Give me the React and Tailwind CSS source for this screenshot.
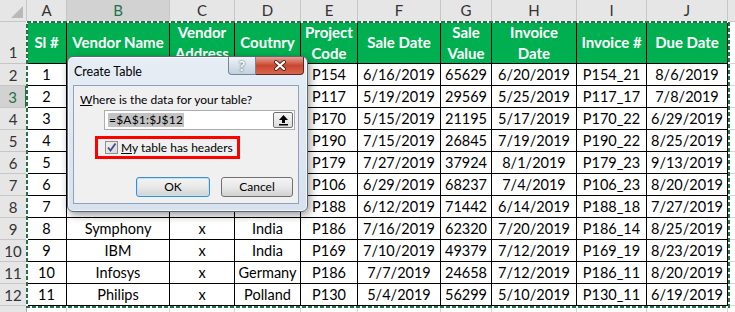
import React from 'react';

// Excel sheet with the "Create Table" dialog open over it.

const COLS = ['A', 'B', 'C', 'D', 'E', 'F', 'G', 'H', 'I', 'J'];

const HEADERS = [
  'Sl #',
  'Vendor Name',
  'Vendor Address',
  'Coutnry',
  'Project Code',
  'Sale Date',
  'Sale Value',
  'Invoice Date',
  'Invoice #',
  'Due Date',
];

// cells under the dialog (B2:D8) are left blank, nothing of them shows
const ROWS = [
  ['1', '', '', '', 'P154', '6/16/2019', '65629', '6/20/2019', 'P154_21', '8/6/2019'],
  ['2', '', '', '', 'P117', '5/19/2019', '29569', '5/25/2019', 'P117_17', '7/8/2019'],
  ['3', '', '', '', 'P170', '5/15/2019', '21195', '5/17/2019', 'P170_22', '6/29/2019'],
  ['4', '', '', '', 'P190', '7/15/2019', '26845', '7/19/2019', 'P190_22', '8/25/2019'],
  ['5', '', '', '', 'P179', '7/27/2019', '37924', '8/1/2019', 'P179_23', '9/13/2019'],
  ['6', '', '', '', 'P106', '6/29/2019', '68237', '7/4/2019', 'P106_23', '8/20/2019'],
  ['7', '', '', '', 'P188', '6/12/2019', '71442', '6/14/2019', 'P188_18', '7/27/2019'],
  ['8', 'Symphony', 'x', 'India', 'P186', '7/16/2019', '62320', '7/20/2019', 'P186_14', '8/25/2019'],
  ['9', 'IBM', 'x', 'India', 'P169', '7/10/2019', '49379', '7/12/2019', 'P169_19', '8/23/2019'],
  ['10', 'Infosys', 'x', 'Germany', 'P186', '7/7/2019', '24658', '7/12/2019', 'P186_11', '8/20/2019'],
  ['11', 'Philips', 'x', 'Polland', 'P130', '5/4/2019', '56299', '5/10/2019', 'P130_11', '6/19/2019'],
];

function CornerCell() {
  return (
    <div className="relative bg-[#e6e6e6] border-r border-b border-[#c6c6c6]">
      <svg className="absolute right-[3px] bottom-[3px]" width="12" height="12" viewBox="0 0 12 12">
        <polygon points="12,0 12,12 0,12" fill="#b9b9b9" />
      </svg>
    </div>
  );
}

function ColHeader({ letter }) {
  const selected = letter === 'B';
  return (
    <div
      className={
        'flex items-center justify-center border-r border-b border-[#c6c6c6] text-[15px] ' +
        (selected ? 'bg-[#d2d2d2] text-[#217346]' : 'bg-[#e6e6e6] text-[#333]')
      }
    >
      {letter}
    </div>
  );
}

function RowHeader({ n, tall }) {
  const selected = n === 3;
  return (
    <div
      className={
        'flex justify-center border-b border-[#c6c6c6] text-[15px] leading-[20px] ' +
        (tall ? 'items-end pb-[1px] ' : 'items-center ') +
        (selected
          ? 'bg-[#d2d2d2] text-[#217346] border-r-2 border-r-[#217346]'
          : 'bg-[#e6e6e6] text-[#333] border-r border-r-[#ababab]')
      }
    >
      {n}
    </div>
  );
}

function UpArrowIcon() {
  return (
    <svg width="11" height="12" viewBox="0 0 11 12">
      <polygon points="5.5,1 1,6 10,6" fill="#000" />
      <rect x="4" y="5" width="3" height="4" fill="#000" />
      <rect x="1" y="10" width="9" height="1.5" fill="#000" />
    </svg>
  );
}

function CheckIcon() {
  return (
    <svg width="11" height="11" viewBox="0 0 11 11">
      <path d="M2 5.5 L4.5 8.5 L9.5 1.5" fill="none" stroke="#3b4f8f" strokeWidth="1.8" />
    </svg>
  );
}

function CloseIcon() {
  return (
    <svg width="14" height="11" viewBox="0 0 14 11">
      <path d="M3 2 L11 9 M11 2 L3 9" stroke="#4a2a22" strokeWidth="4" strokeLinecap="round" />
      <path d="M3 2 L11 9 M11 2 L3 9" stroke="#fff" strokeWidth="2.2" strokeLinecap="round" />
    </svg>
  );
}

function CreateTableDialog() {
  return (
    <div className="absolute left-[67px] top-[56px] w-[241px] h-[156px] flex flex-col rounded-[6px] border border-[#5d6875] bg-gradient-to-b from-[#e6edf5] to-[#d7e2ee] shadow-[inset_0_0_0_1px_#ffffffb0,2px_3px_8px_rgba(0,0,0,0.4)] font-['Lato',sans-serif] text-black">
      {/* title bar */}
      <div className="flex h-[28px] items-start justify-between">
        <span className="pl-[6px] pt-[7px] text-[12.5px] leading-[16px]">Create Table</span>
        <div className="flex mr-[3px]">
          <div className="flex h-[18px] w-[28px] items-center justify-center rounded-bl-[4px] border border-t-0 border-[#76869a] bg-gradient-to-b from-[#eef3f8] to-[#c3d0df] text-[14px] font-bold text-white [text-shadow:0_0_2px_#1c2a3a]">
            ?
          </div>
          <div className="flex h-[18px] w-[48px] items-center justify-center rounded-br-[4px] border border-l-0 border-t-0 border-[#5a2a22] bg-gradient-to-b from-[#e6a093] via-[#c9462f] to-[#d8664d]">
            <CloseIcon />
          </div>
        </div>
      </div>

      {/* content panel */}
      <div className="ml-[5px] mr-[8px] flex h-[119px] flex-col border border-[#8ea3bb] bg-[#f0f0f0] px-[6px] text-[12px]">
        <div className="mt-[6px] leading-[16px]">
          <span className="underline">W</span>here is the data for your table?
        </div>
        <div className="ml-[24px] mr-[-3px] mt-[2px] flex h-[20px] items-center border border-[#abadb3] bg-white pl-[3px] pr-[1px]">
          <span className="bg-[#c3c3c3] px-[1px] leading-[14px] tracking-[0.2px]">=$A$1:$J$12</span>
          <div className="ml-auto flex h-[16px] w-[20px] items-center justify-center rounded-[2px] border border-[#707070] bg-gradient-to-b from-[#f6f6f6] to-[#dcdcdc]">
            <UpArrowIcon />
          </div>
        </div>
        <div className="ml-[15px] mt-[6px] flex h-[23px] w-[145px] items-center border-[3px] border-[#ff0000] pl-[7px]">
          <div className="flex h-[13px] w-[13px] items-center justify-center border border-[#8f8f8f] bg-gradient-to-br from-[#f0f0f0] to-[#d8d8d8]">
            <CheckIcon />
          </div>
          <span className="ml-[3px] leading-[16px]">
            <span className="underline">M</span>y table has headers
          </span>
        </div>
        <div className="mt-[18px] mr-[-1px] flex justify-end gap-[11px]">
          <button className="h-[20px] w-[74px] rounded-[3px] border border-[#3c8ecf] bg-gradient-to-b from-[#f4f4f4] via-[#e8e8e8] to-[#d2d2d2] text-[12px] shadow-[inset_0_0_0_1px_#bfe3fa]">
            OK
          </button>
          <button className="h-[20px] w-[72px] rounded-[3px] border border-[#707070] bg-gradient-to-b from-[#f4f4f4] via-[#e8e8e8] to-[#d2d2d2] text-[12px]">
            Cancel
          </button>
        </div>
      </div>
    </div>
  );
}

function MarchingAnts() {
  return (
    <svg className="absolute left-[26px] top-[21px] pointer-events-none" width="704" height="287">
      <rect x="1" y="1" width="702" height="285" fill="none" stroke="#ffffff" strokeWidth="2" />
      <rect x="1" y="1" width="702" height="285" fill="none" stroke="#217346" strokeWidth="2" strokeDasharray="4 2" />
    </svg>
  );
}

export default function App() {
  return (
    <div className="relative h-[312px] w-[735px] overflow-hidden bg-white font-['Lato',sans-serif]">
      <div className="grid grid-cols-[27px_40px_103px_65px_66px_57px_83px_51px_85px_70px_81px_7px] grid-rows-[22px_42px_repeat(12,22px)]">
        {/* column letters */}
        <CornerCell />
        {COLS.map((c) => (
          <ColHeader key={c} letter={c} />
        ))}
        <div className="bg-[#e6e6e6] border-b border-[#c6c6c6]" />

        {/* row 1: green header */}
        <RowHeader n={1} tall />
        {HEADERS.map((h) => (
          <div
            key={h}
            className="flex items-center justify-center border-r border-b border-black bg-[#00b050] px-[2px] text-center text-[15px] font-bold leading-[21px] text-white"
          >
            {h}
          </div>
        ))}
        <div className="border-b border-[#d4d4d4]" />

        {/* data rows */}
        {ROWS.map((r, i) => (
          <React.Fragment key={i}>
            <RowHeader n={i + 2} />
            {r.map((v, j) => (
              <div
                key={j}
                className="flex items-center justify-center overflow-hidden whitespace-nowrap border-r border-b border-black text-[14.5px] text-black"
              >
                {v}
              </div>
            ))}
            <div className="border-b border-[#d4d4d4]" />
          </React.Fragment>
        ))}

        {/* row 13, cut off by the window edge */}
        <div className="bg-[#e6e6e6] border-r border-[#ababab]" />
        {COLS.map((c) => (
          <div key={c} className="border-r border-[#d4d4d4]" />
        ))}
        <div />
      </div>

      <MarchingAnts />
      <CreateTableDialog />
    </div>
  );
}
